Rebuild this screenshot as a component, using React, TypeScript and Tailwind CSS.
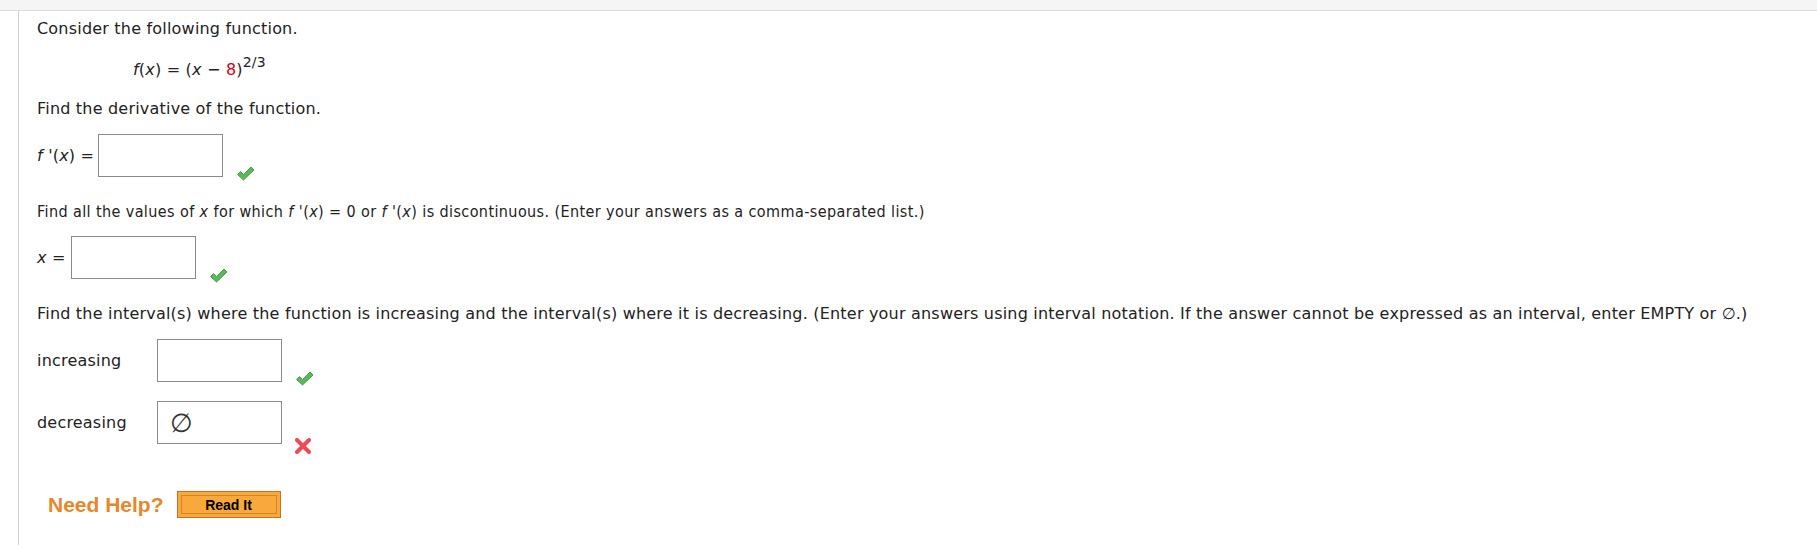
import React from "react";

function Check() {
  return (
    <svg width="19" height="15" viewBox="0 0 19 15" className="mb-[-4px] ml-[13px] shrink-0">
      <path d="M1.5 8.5 L4.5 5.5 L7.5 8.5 L15 1 L18 4 L7.5 14 Z" fill="#5cb85c" stroke="#4a9d4a" strokeWidth="1" strokeLinejoin="round" />
    </svg>
  );
}

function Cross() {
  return (
    <svg width="16" height="16" viewBox="0 0 16 16" className="mb-[-10px] ml-[13px] shrink-0">
      <path d="M2 2 L14 14 M14 2 L2 14" stroke="#ee4a55" strokeWidth="4" strokeLinecap="round" />
    </svg>
  );
}

function AnswerBox({ children }: { children?: React.ReactNode }) {
  return (
    <div className="w-[125px] h-[43px] border border-[#8a8a8a] bg-white flex items-center px-[12px] shrink-0">
      {children}
    </div>
  );
}

export default function App() {
  const body = { fontFamily: '"DejaVu Sans", Verdana, sans-serif' };
  return (
    <div className="w-[1817px] h-[545px] bg-white text-[#222] overflow-hidden" style={body}>
      <div className="h-[11px] bg-[#f5f5f5] border-b border-[#dcdcdc]" />
      <div className="ml-[18px] border-l border-[#cfcfcf] h-[534px] pl-[18px] pt-[8px] text-[16px] leading-[20px] tracking-[0.2px]">
        <p>Consider the following function.</p>

        <p className="mt-[21px] ml-[96px]">
          <i>f</i>(<i>x</i>) = (<i>x</i> − <span className="text-[#d0021b]">8</span>)
          <sup className="text-[14px] top-[-8px]">2/3</sup>
        </p>

        <p className="mt-[19px]">Find the derivative of the function.</p>

        <div className="mt-[15px] flex items-end">
          <div className="flex items-center">
            <span className="w-[61px]">
              <i>f</i> '(<i>x</i>) =
            </span>
            <AnswerBox />
          </div>
          <Check />
        </div>

        <p className="mt-[25px] tracking-[0.4px]" style={{ fontFamily: '"DejaVu Sans Condensed", "DejaVu Sans", sans-serif' }}>
          Find all the values of <i>x</i> for which <i>f</i> '(<i>x</i>) = 0 or <i>f</i> '(<i>x</i>) is discontinuous. (Enter your answers as a comma-separated list.)
        </p>

        <div className="mt-[14px] flex items-end">
          <div className="flex items-center">
            <span className="w-[34px]">
              <i>x</i> =
            </span>
            <AnswerBox />
          </div>
          <Check />
        </div>

        <p className="mt-[25px]">
          Find the interval(s) where the function is increasing and the interval(s) where it is decreasing. (Enter your answers using interval notation. If the answer cannot be expressed as an interval, enter EMPTY or ∅.)
        </p>

        <div className="mt-[15px] flex items-end">
          <div className="flex items-center">
            <span className="w-[120px]">increasing</span>
            <AnswerBox />
          </div>
          <Check />
        </div>

        <div className="mt-[19px] flex items-end">
          <div className="flex items-center">
            <span className="w-[120px]">decreasing</span>
            <AnswerBox>
              <span className="text-[26px] leading-[26px] font-light text-[#333]">∅</span>
            </AnswerBox>
          </div>
          <Cross />
        </div>

        <div className="mt-[47px] ml-[11px] flex items-center tracking-normal" style={{ fontFamily: '"Liberation Sans", Arial, sans-serif' }}>
          <span className="text-[21px] font-bold text-[#e8862a]">Need Help?</span>
          <button className="ml-[13px] w-[104px] h-[27px] border border-[#c9731f] bg-[#f9a93b] p-[3px]">
            <span className="flex h-full w-full items-center justify-center border border-[#d2832e] text-[14px] font-bold text-black">
              Read It
            </span>
          </button>
        </div>
      </div>
    </div>
  );
}
